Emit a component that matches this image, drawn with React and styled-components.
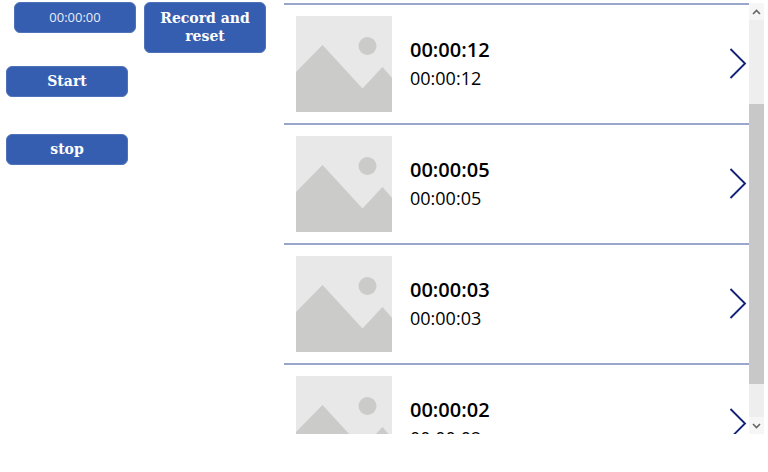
import React from "react";
import styled, { createGlobalStyle } from "styled-components";

const Global = createGlobalStyle`
  html, body { margin: 0; padding: 0; background: #fff; }
  body { width: 768px; height: 472px; overflow: hidden; }
`;

const Page = styled.div`
  display: flex;
  align-items: flex-start;
  width: 768px;
  height: 472px;
`;

const Controls = styled.div`
  width: 284px;
  flex: none;
  padding: 2px 0 0 6px;
  box-sizing: border-box;
  display: flex;
  flex-direction: column;
`;

const TopRow = styled.div`
  display: flex;
  align-items: flex-start;
  gap: 8px;
  margin-left: 8px;
  height: 50px;
`;

const Button = styled.div`
  width: 122px;
  height: ${(p) => (p.$tall ? 51 : 31)}px;
  margin-top: ${(p) => p.$top || 0}px;
  padding: 0 4px 1px;
  box-sizing: border-box;
  display: flex;
  align-items: center;
  justify-content: center;
  text-align: center;
  background: #365eb0;
  border: 1px solid #4f72ba;
  border-radius: 6px;
  color: #fff;
  font-family: "DejaVu Serif", "Liberation Serif", serif;
  font-weight: 700;
  font-size: 14px;
  line-height: 18px;
`;

const Timer = styled(Button)`
  font-family: "Open Sans", sans-serif;
  font-weight: 400;
  font-size: 13px;
  color: #e6ecf9;
`;

const ListFrame = styled.div`
  display: flex;
  margin-top: 3px;
  height: 431px;
  overflow: hidden;
`;

const List = styled.div`
  width: 465px;
  flex: none;
`;

const Row = styled.div`
  height: 120px;
  box-sizing: border-box;
  border-top: 2px solid #9aa5cc;
  display: flex;
  align-items: flex-start;
  padding: 11px 2px 0 12px;
`;

const Thumb = styled.svg`
  width: 96px;
  height: 96px;
  flex: none;
  display: block;
`;

const Texts = styled.div`
  margin-left: 18px;
  padding-top: 20px;
  flex: 1;
  font-family: "Open Sans", sans-serif;
  color: #000;
`;

const Title = styled.div`
  font-size: 20px;
  font-weight: 600;
  line-height: 28px;
`;

const Sub = styled.div`
  font-size: 18px;
  font-weight: 400;
  line-height: 28px;
`;

const Chevron = styled.svg`
  width: 18px;
  height: 32px;
  margin-top: 31px;
  flex: none;
`;

const Track = styled.div`
  width: 15px;
  height: 431px;
  flex: none;
  background: #eeeeee;
  display: flex;
  flex-direction: column;
`;

const ArrowBox = styled.div`
  height: 17px;
  flex: none;
  display: flex;
  align-items: center;
  justify-content: center;
  background: #f6f6f6;
`;

const ScrollThumb = styled.div`
  height: 280px;
  margin-top: 84px;
  background: #c8c8c8;
  flex: none;
`;

const TrackFill = styled.div`
  flex: 1;
`;

const Placeholder = () => (
  <Thumb viewBox="0 0 96 96">
    <rect width="96" height="96" fill="#e8e8e8" />
    <circle cx="71.5" cy="30" r="9" fill="#cbcbc9" />
    <path d="M0 56 L26.5 29 L66.5 72.5 L86.5 51 L96 62 L96 96 L0 96 Z" fill="#cbcbc9" />
  </Thumb>
);

const Arrow = () => (
  <Chevron viewBox="0 0 18 32">
    <path d="M1.5 2 L16 16.5 L1.5 31" fill="none" stroke="#14237a" strokeWidth="1.9" />
  </Chevron>
);

const Rows = ["00:00:12", "00:00:05", "00:00:03", "00:00:02"];

export default function App() {
  return (
    <Page>
      <Global />
      <Controls>
        <TopRow>
          <Timer>00:00:00</Timer>
          <Button $tall>Record and reset</Button>
        </TopRow>
        <Button $top={14}>Start</Button>
        <Button $top={37}>stop</Button>
      </Controls>
      <ListFrame>
        <List>
          {Rows.map((t) => (
            <Row key={t}>
              <Placeholder />
              <Texts>
                <Title>{t}</Title>
                <Sub>{t}</Sub>
              </Texts>
              <Arrow />
            </Row>
          ))}
        </List>
        <Track>
          <ArrowBox>
            <svg width="9" height="6" viewBox="0 0 9 6">
              <path d="M1 5 L4.5 1.5 L8 5" fill="none" stroke="#666" strokeWidth="1.6" />
            </svg>
          </ArrowBox>
          <ScrollThumb />
          <TrackFill />
          <ArrowBox>
            <svg width="9" height="6" viewBox="0 0 9 6">
              <path d="M1 1 L4.5 4.5 L8 1" fill="none" stroke="#666" strokeWidth="1.6" />
            </svg>
          </ArrowBox>
        </Track>
      </ListFrame>
    </Page>
  );
}
